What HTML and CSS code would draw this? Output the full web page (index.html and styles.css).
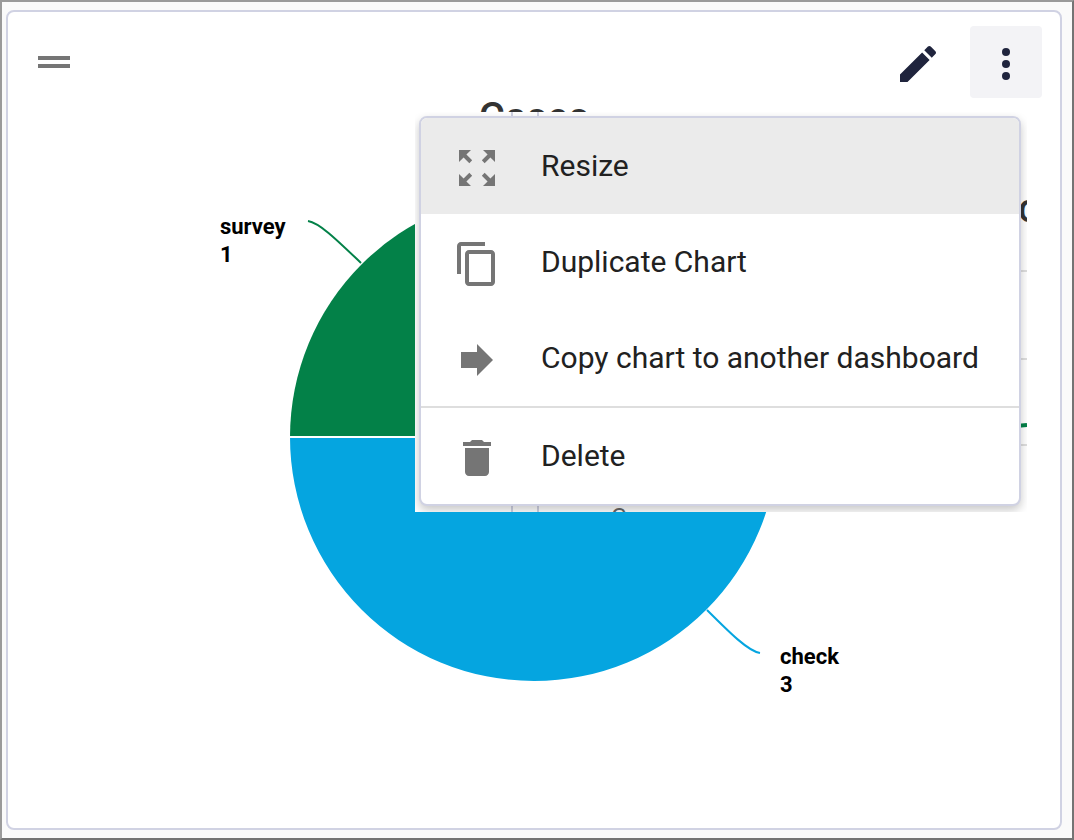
FILE: index.html
```html
<!DOCTYPE html>
<html lang="en">
<head>
    <meta charset="UTF-8">
    <title>Cases</title>
    <link rel="stylesheet" href="styles.css">
</head>
<body>
<div class="card">
    <div class="toolbar">
        <span class="handle">
            <svg class="icon" viewBox="0 0 24 24"><path d="M20 9H4v2h16V9zM4 15h16v-2H4v2z"/></svg>
        </span>
        <button class="tool" type="button" aria-label="Edit">
            <svg class="icon" viewBox="0 0 24 24"><path d="M3 17.25V21h3.75L17.81 9.94l-3.75-3.75L3 17.25zM20.71 7.04c.39-.39.39-1.02 0-1.41l-2.34-2.34c-.39-.39-1.02-.39-1.41 0l-1.83 1.83 3.75 3.75 1.83-1.83z"/></svg>
        </button>
        <button class="tool active" type="button" aria-label="More" aria-expanded="true">
            <svg class="icon" viewBox="0 0 24 24"><circle cx="12" cy="6" r="2"/><circle cx="12" cy="12" r="2"/><circle cx="12" cy="18" r="2"/></svg>
        </button>
    </div>
    <h2 class="title">Cases</h2>
    <svg class="pie" viewBox="-334 -257 668 540">
        <path class="blue" d="M0 0V-244A244 244 0 1 1 -244 0Z"/>
        <path class="green" d="M0 0H-244A244 244 0 0 1 0 -244Z"/>
        <path class="split" d="M-245 0H0V-245"/>
        <path class="line green-line" d="M-173 -174C-196 -196 -214 -214 -226 -216"/>
        <path class="line blue-line" d="M173 173C196 196 214 214 226 216"/>
        <text x="-314" y="-203">survey</text>
        <text x="-314" y="-175">1</text>
        <text x="246" y="227">check</text>
        <text x="246" y="255">3</text>
    </svg>

    <div class="popup">
        <!-- the next chart, seen round the edges of the menu -->
        <svg class="behind" viewBox="0 0 612 400">
            <path class="grid-v" d="M97 0V400M123 0V400"/>
            <path class="grid-h" d="M600 159H612M600 247H612M600 333H612"/>
            <path class="trend" d="M600 314L612 313"/>
            <text class="big" x="603" y="110">c</text>
            <text class="small" x="196" y="413">C</text>
        </svg>
        <ul class="menu" role="menu">
            <li role="none">
                <button class="item selected" type="button" role="menuitem">
                    <svg class="icon" viewBox="0 0 24 24"><path d="M15 3l2.3 2.3-2.89 2.87 1.42 1.42L18.7 6.7 21 9V3zM3 9l2.3-2.3 2.87 2.89 1.42-1.42L6.7 5.3 9 3H3zM9 21l-2.3-2.3 2.89-2.87-1.42-1.42L5.3 17.3 3 15v6zM21 15l-2.3 2.3-2.87-2.89-1.42 1.42 2.89 2.87L15 21h6z"/></svg>
                    <span>Resize</span>
                </button>
            </li>
            <li role="none">
                <button class="item" type="button" role="menuitem">
                    <svg class="icon" viewBox="0 0 24 24"><path d="M16 1H4c-1.1 0-2 .9-2 2v14h2V3h12V1zm3 4H8c-1.1 0-2 .9-2 2v14c0 1.1.9 2 2 2h11c1.1 0 2-.9 2-2V7c0-1.1-.9-2-2-2zm0 16H8V7h11v14z"/></svg>
                    <span>Duplicate Chart</span>
                </button>
            </li>
            <li role="none">
                <button class="item" type="button" role="menuitem">
                    <svg class="icon" viewBox="0 0 24 24"><path d="M12 8V4l8 8-8 8v-4H4V8z"/></svg>
                    <span>Copy chart to another dashboard</span>
                </button>
            </li>
            <li class="divided" role="none">
                <button class="item" type="button" role="menuitem">
                    <svg class="icon" viewBox="0 0 24 24"><path d="M6 19c0 1.1.9 2 2 2h8c1.1 0 2-.9 2-2V7H6v12zM19 4h-3.5l-1-1h-5l-1 1H5v2h14V4z"/></svg>
                    <span>Delete</span>
                </button>
            </li>
        </ul>
    </div>
</div>
</body>
</html>
```
FILE: styles.css
```css
*{
    margin: 0;
    padding: 0;
    box-sizing: border-box;
}
body{
    min-height: 100vh;
    padding: 8px 10px 8px 4px;
    border: 2px solid;
    border-color: #9a9a9a #747474 #747474 #9a9a9a;
    background: #fafafa;
    font-family: Roboto, "Liberation Sans", sans-serif;
}
li{
    list-style: none;
}
button{
    border: 0;
    background: none;
    font: inherit;
    cursor: pointer;
}
.card{
    position: relative;
    min-height: calc(100vh - 20px);
    border: 2px solid #d0d2e3;
    border-radius: 8px;
    background: #fff;
}
.icon{
    display: block;
    flex: none;
    width: 48px;
    height: 48px;
    fill: currentColor;
}
.toolbar{
    display: flex;
    align-items: center;
    gap: 16px;
    padding: 14px 18px 0 22px;
}
.handle{
    margin-right: auto;
    color: #757575;
    cursor: move;
}
.tool{
    display: flex;
    align-items: center;
    justify-content: center;
    width: 72px;
    height: 72px;
    padding-top: 4px;
    border-radius: 4px;
    color: #1f243d;
}
.active{
    background: #f3f3f6;
}
.title{
    color: #333;
    font-size: 40px;
    font-weight: 500;
    line-height: 40px;
    text-align: center;
}
.pie{
    display: block;
    width: 668px;
    max-width: 100%;
    margin: 42px auto 0;
    font-size: 22px;
    font-weight: bold;
}
.blue{
    fill: #05a5e0;
}
.green{
    fill: #038148;
}
.split{
    fill: none;
    stroke: #fff;
    stroke-width: 2;
}
.line{
    fill: none;
    stroke-width: 2;
}
.blue-line{
    stroke: #05a5e0;
}
.green-line{
    stroke: #038148;
}
.popup{
    position: absolute;
    top: 100px;
    right: 33px;
    width: 612px;
    padding: 4px 6px 6px 4px;
    overflow: hidden;
    background: #fff;
}
.behind{
    position: absolute;
    top: 0;
    left: 0;
    width: 612px;
    height: 400px;
}
.grid-v{
    stroke: #d0d2e3;
    stroke-width: 2;
}
.grid-h{
    stroke: #dedede;
    stroke-width: 2;
}
.trend{
    stroke: #038148;
    stroke-width: 4;
}
.big{
    fill: #333;
    font-size: 40px;
    font-weight: 500;
}
.small{
    fill: #666;
    font-size: 24px;
}
.menu{
    position: relative;
    overflow: hidden;
    border: 2px solid #d0d2e3;
    border-radius: 8px;
    background: #fff;
    box-shadow: 0 4px 10px rgba(0, 0, 0, .22);
}
.item{
    display: flex;
    align-items: center;
    gap: 40px;
    width: 100%;
    height: 96px;
    padding: 0 32px;
    color: #212121;
    font-size: 30px;
    line-height: 40px;
    text-align: left;
    white-space: nowrap;
}
.item .icon{
    margin-top: 4px;
    color: #757575;
}
.selected{
    background: #ebebeb;
}
.divided{
    border-top: 2px solid #dedede;
}
```
